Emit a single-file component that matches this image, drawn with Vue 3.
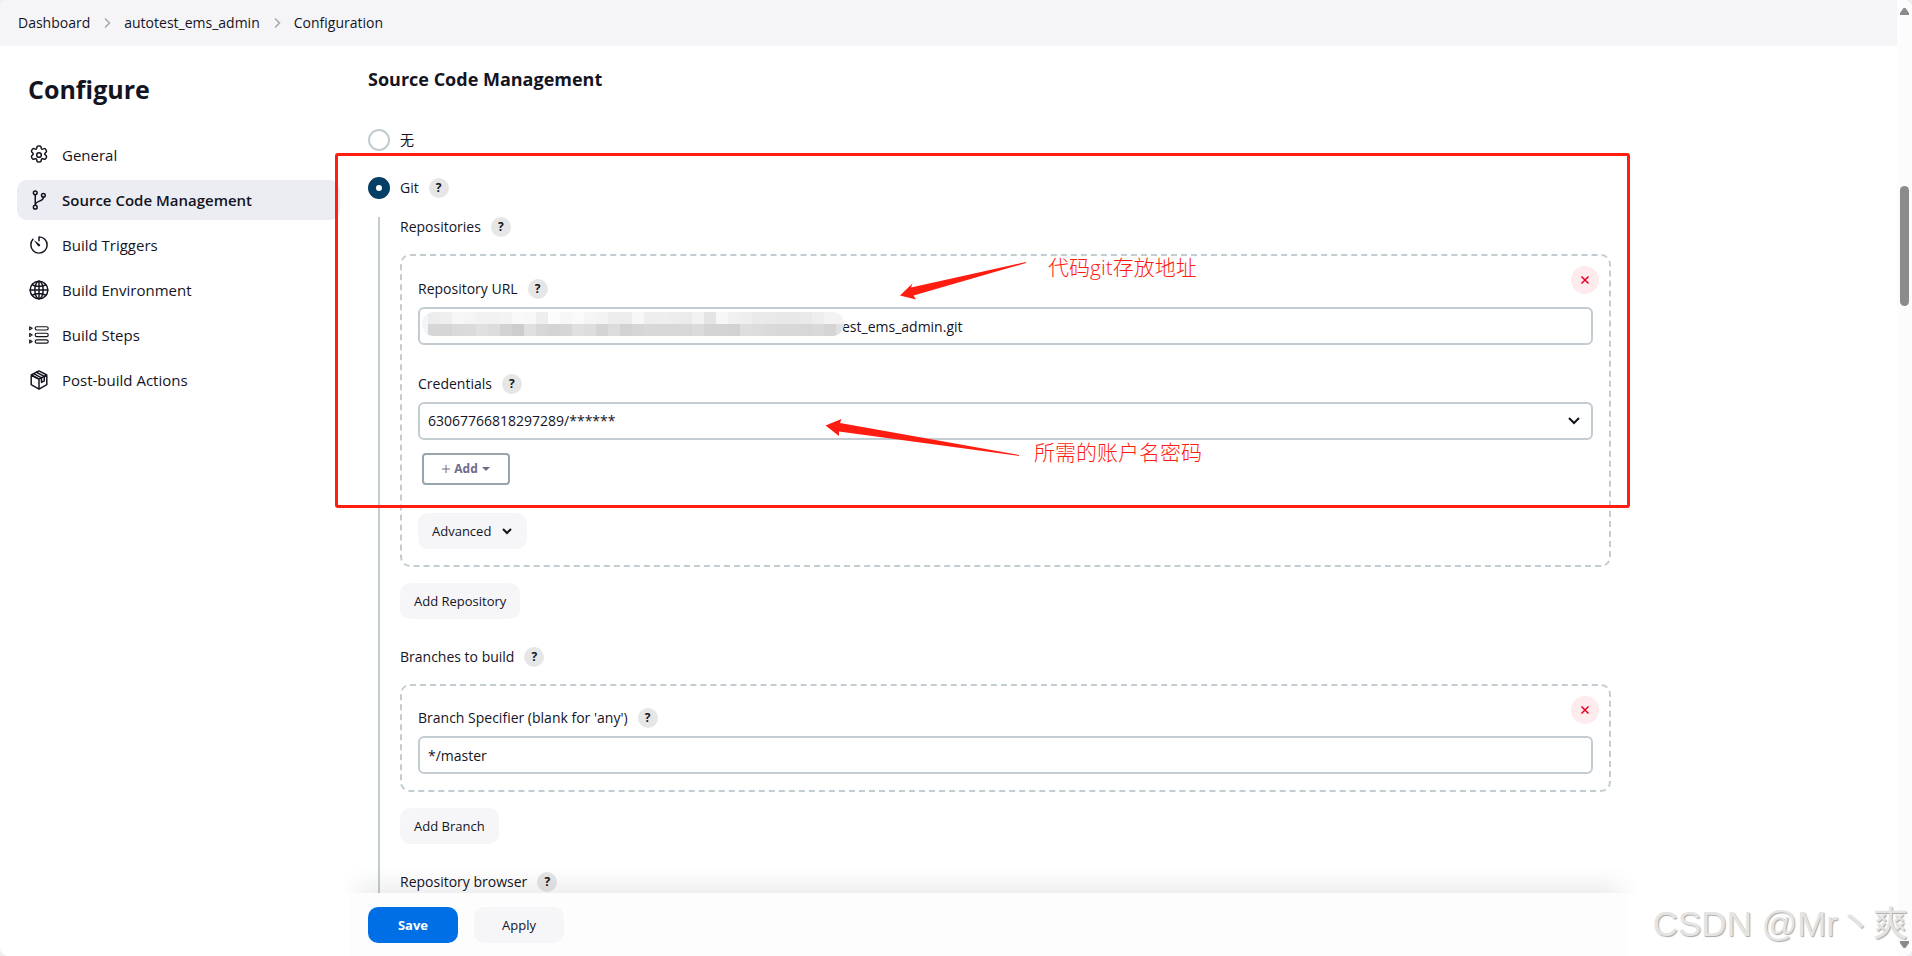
<script setup>
import { ref } from 'vue'

const crumbs = ['Dashboard', 'autotest_ems_admin', 'Configuration']

const navItems = [
  { label: 'General', icon: 'gear' },
  { label: 'Source Code Management', icon: 'branch', active: true },
  { label: 'Build Triggers', icon: 'timer' },
  { label: 'Build Environment', icon: 'globe' },
  { label: 'Build Steps', icon: 'steps' },
  { label: 'Post-build Actions', icon: 'box' },
]

const scm = ref('git')
const repoUrl = ref('est_ems_admin.git')
const credentials = ref('63067766818297289/******')
const branch = ref('*/master')

// Grey levels of the pixelated strip that hides the start of the URL
const maskTop = [236, 239, 247, 245, 242, 242, 243, 249, 248, 238, 252, 247, 250, 245, 243, 237, 237, 247, 238, 238, 237, 235, 242, 228, 247, 240, 238, 234, 234, 232, 232, 234, 238, 243, 243]
const maskBottom = [214, 214, 218, 219, 224, 220, 210, 205, 224, 215, 212, 214, 224, 221, 212, 220, 210, 214, 216, 215, 215, 215, 219, 212, 212, 210, 222, 220, 218, 216, 216, 215, 217, 213, 224]
const maskCells = [maskTop, maskBottom].flatMap((row, y) =>
  row.map((g, x) => ({ x: 6 + x * 12, y: y * 12, fill: `rgb(${g}, ${g}, ${g + 1})` })),
)
</script>

<template>
  <div class="window">
    <div class="page">
      <nav class="breadcrumbs" aria-label="Breadcrumb">
        <template v-for="(crumb, i) in crumbs" :key="crumb">
          <svg v-if="i" class="crumb-sep" viewBox="0 0 8 12"><path d="M2 1.5 6.5 6 2 10.5" /></svg>
          <a href="#">{{ crumb }}</a>
        </template>
      </nav>

      <div class="body">
        <aside class="sidebar">
          <h1>Configure</h1>
          <nav class="tasks" aria-label="Sections">
            <a v-for="item in navItems" :key="item.label" href="#" class="task" :class="{ active: item.active }">
              <svg class="task-icon" viewBox="0 0 512 512">
                <g v-if="item.icon === 'gear'">
                  <circle cx="256" cy="256" r="60" />
                  <path d="M256 24c22 0 44 4 48 14l14 50c4 12 18 20 30 17l50-13c12-3 26 14 38 34s18 40 10 48l-36 38c-9 9-9 25 0 34l36 38c8 8 2 30-10 50s-26 36-38 33l-50-13c-12-3-26 5-30 17l-14 50c-4 10-26 14-48 14s-44-4-48-14l-14-50c-4-12-18-20-30-17l-50 13c-12 3-26-13-38-33s-18-42-10-50l36-38c9-9 9-25 0-34l-36-38c-8-8-2-28 10-48s26-37 38-34l50 13c12 3 26-5 30-17l14-50c4-10 26-14 48-14z" />
                </g>
                <g v-else-if="item.icon === 'branch'">
                  <circle cx="160" cy="72" r="48" />
                  <circle cx="160" cy="440" r="48" />
                  <circle cx="368" cy="136" r="48" />
                  <path d="M160 120v272M368 184c0 128-208 76-208 208" />
                </g>
                <g v-else-if="item.icon === 'timer'">
                  <path d="M100 108A208 208 0 0048 254c0 116 92 210 208 210s208-92 208-208c0-114-90-205-203-208a5 5 0 00-5 5v92" />
                  <path class="solid" d="M230 282 138 156c-6-9 3-18 12-12l126 92a32 32 0 01-46 46z" />
                </g>
                <g v-else-if="item.icon === 'globe'">
                  <circle cx="256" cy="256" r="226" />
                  <ellipse cx="256" cy="256" rx="106" ry="226" />
                  <path d="M256 30v452M30 256h452M82 122c100 58 248 58 348 0M82 390c100-58 248-58 348 0" />
                </g>
                <g v-else-if="item.icon === 'steps'" class="fine">
                  <rect x="158" y="44" width="334" height="84" rx="42" />
                  <rect x="158" y="212" width="334" height="84" rx="42" />
                  <rect x="158" y="380" width="334" height="84" rx="42" />
                  <path d="M18 48v76l62-38zM18 216v76l62-38zM18 384v76l62-38z" />
                </g>
                <g v-else>
                  <path d="M256 24 456 128v246L256 488 56 374V128zM56 128l200 108 200-108M256 236v252" />
                  <path d="M120 94l200 108v116l70-38V164L190 58M222 218 88 146" />
                </g>
              </svg>
              <span>{{ item.label }}</span>
            </a>
          </nav>
        </aside>

        <main class="main">
          <form class="form" @submit.prevent>
            <h2>Source Code Management</h2>

            <div class="radio-row">
              <input id="scm-none" v-model="scm" type="radio" name="scm" value="none" />
              <label for="scm-none">无</label>
            </div>
            <div class="radio-row">
              <input id="scm-git" v-model="scm" type="radio" name="scm" value="git" />
              <label for="scm-git">Git</label>
              <button type="button" class="help" aria-label="Help for Git">?</button>
            </div>

            <div class="nested">
              <div class="label-row">
                <span>Repositories</span>
                <button type="button" class="help" aria-label="Help for Repositories">?</button>
              </div>
              <section class="group repositories">
                <button type="button" class="remove" aria-label="Delete repository">
                  <svg viewBox="0 0 10 10"><path d="M1.5 1.5l7 7M8.5 1.5l-7 7" /></svg>
                </button>
                <div class="label-row">
                  <label for="repo-url">Repository URL</label>
                  <button type="button" class="help" aria-label="Help for Repository URL">?</button>
                </div>
                <div class="control">
                  <input id="repo-url" v-model="repoUrl" class="field masked" type="text" />
                  <svg class="mask" width="422" height="24" viewBox="0 0 422 24">
                    <clipPath id="mask-shape"><rect width="422" height="24" rx="12" /></clipPath>
                    <g clip-path="url(#mask-shape)" shape-rendering="crispEdges">
                      <rect width="422" height="24" fill="#f4f5f8" />
                      <rect v-for="c in maskCells" :key="`${c.x}-${c.y}`" :x="c.x" :y="c.y" width="12" height="12" :fill="c.fill" />
                    </g>
                  </svg>
                </div>

                <div class="label-row next">
                  <label for="credentials">Credentials</label>
                  <button type="button" class="help" aria-label="Help for Credentials">?</button>
                </div>
                <div class="control">
                  <select id="credentials" v-model="credentials" class="field">
                    <option>63067766818297289/******</option>
                  </select>
                  <svg class="select-arrow" viewBox="0 0 14 9"><path d="M2 2l5 5 5-5" /></svg>
                </div>
                <button type="button" class="add-credential">
                  <svg class="plus" viewBox="0 0 8 8"><path d="M4 0v8M0 4h8" /></svg>
                  Add
                  <svg class="caret" viewBox="0 0 8 4"><path d="M0 0h8L4 4z" /></svg>
                </button>
                <button type="button" class="btn advanced">
                  Advanced
                  <svg class="chevron" viewBox="0 0 12 8"><path d="M2 2l4 4 4-4" /></svg>
                </button>
              </section>
              <button type="button" class="btn">Add Repository</button>

              <div class="label-row section">
                <span>Branches to build</span>
                <button type="button" class="help" aria-label="Help for Branches to build">?</button>
              </div>
              <section class="group">
                <button type="button" class="remove" aria-label="Delete branch">
                  <svg viewBox="0 0 10 10"><path d="M1.5 1.5l7 7M8.5 1.5l-7 7" /></svg>
                </button>
                <div class="label-row">
                  <label for="branch">Branch Specifier (blank for 'any')</label>
                  <button type="button" class="help" aria-label="Help for Branch Specifier">?</button>
                </div>
                <div class="control">
                  <input id="branch" v-model="branch" class="field" type="text" />
                </div>
              </section>
              <button type="button" class="btn">Add Branch</button>

              <div class="label-row section">
                <span>Repository browser</span>
                <button type="button" class="help" aria-label="Help for Repository browser">?</button>
              </div>
            </div>

            <div class="highlight"></div>
            <svg class="arrows" width="210" height="200" viewBox="820 260 210 200">
              <path d="M900 295.5 912.5 283.5 911 287.5 1026 262v1L913.5 295.5 916 299.5z" />
              <path d="M825.5 425.5 841.5 419 840 423 1019 455v1L839 431.5V436z" />
            </svg>
            <p class="note note-url">代码git存放地址</p>
            <p class="note note-credentials">所需的账户名密码</p>
          </form>

          <footer class="actions">
            <button type="button" class="btn primary">Save</button>
            <button type="button" class="btn wide">Apply</button>
          </footer>
        </main>
      </div>
    </div>

    <div class="scrollbar" aria-hidden="true">
      <svg viewBox="0 0 9 7"><path d="M3.5 0h2L9 5v2H0V5z" /></svg>
      <div class="track"><div class="thumb"></div></div>
      <svg viewBox="0 0 9 7"><path d="M0 0h9v2L5.5 7h-2L0 2z" /></svg>
    </div>
    <div class="watermark">CSDN @Mr丶爽</div>
  </div>
</template>

<style>
body {
  margin: 0;
  background: #eeeef0;
}
</style>

<style scoped>
.window {
  position: relative;
  display: flex;
  height: 100vh;
  overflow: hidden;
  border-radius: 8px;
  background: #fff;
  color: #14141f;
  font: 14px/20px "Open Sans", "Noto Sans CJK SC", sans-serif;
}
button,
input,
select {
  font: inherit;
  color: inherit;
  margin: 0;
}
button {
  border: 0;
  padding: 0;
  cursor: pointer;
}
a {
  color: inherit;
  text-decoration: none;
}
svg {
  display: block;
  flex: none;
  fill: none;
  stroke: currentColor;
}
.page {
  flex: 1;
  min-width: 0;
  display: flex;
  flex-direction: column;
}
.breadcrumbs {
  flex: none;
  display: flex;
  align-items: center;
  height: 46px;
  padding-left: 18px;
  background: #f5f5f8;
}
.crumb-sep {
  width: 8px;
  height: 12px;
  margin: 0 13px;
  color: #a5a5b5;
  stroke-width: 1.5;
}
.body {
  flex: 1;
  min-height: 0;
  display: flex;
}
.sidebar {
  flex: none;
  box-sizing: border-box;
  width: 368px;
  padding: 27px 28px 0 17px;
}
h1 {
  margin: 0 0 30px 11px;
  font-size: 25px;
  line-height: 32px;
  font-weight: 700;
}
.tasks {
  display: flex;
  flex-direction: column;
  gap: 5px;
}
.task {
  display: flex;
  align-items: center;
  gap: 13px;
  height: 40px;
  padding-left: 12px;
  border-radius: 10px;
  font-size: 15px;
}
.task.active {
  background: #ecedf3;
  font-weight: 600;
}
.task-icon {
  width: 20px;
  height: 20px;
  stroke-width: 38;
  stroke-linecap: round;
  stroke-linejoin: round;
}
.task-icon .fine {
  stroke-width: 30;
}
.task-icon .solid {
  fill: currentColor;
  stroke: none;
}
.main {
  flex: 1;
  min-width: 0;
  max-width: 1243px;
  display: flex;
  flex-direction: column;
}
.form {
  position: relative;
  flex: 1;
  min-height: 0;
  display: flex;
  flex-direction: column;
}
h2 {
  margin: 0;
  padding: 21px 0 38px;
  font-size: 18px;
  line-height: 24px;
  font-weight: 700;
}
.radio-row {
  display: flex;
  align-items: center;
  gap: 10px;
  height: 22px;
  margin-bottom: 26px;
}
.radio-row input {
  appearance: none;
  width: 22px;
  height: 22px;
  border: 2px solid #c3cdd1;
  border-radius: 50%;
  background: #fff;
}
.radio-row input:checked {
  border: 8px solid #063f66;
}
.radio-row + .radio-row {
  margin-bottom: 18px;
}
.help {
  width: 20px;
  height: 20px;
  border-radius: 50%;
  background: #e6e6e6;
  font-size: 12px;
  line-height: 20px;
  font-weight: 700;
  text-align: center;
}
.nested {
  flex: 1;
  min-height: 0;
  margin-left: 10px;
  padding-left: 20px;
  border-left: 2px solid #c3cdd1;
}
.label-row {
  display: flex;
  align-items: center;
  gap: 10px;
  height: 20px;
}
.group {
  position: relative;
  margin: 17px 0 16px;
  padding: 22px 16px 16px;
  border: 2px dashed #c3cdd1;
  border-radius: 10px;
}
.group.repositories {
  padding-top: 23px;
}
.remove {
  position: absolute;
  top: 10px;
  right: 10px;
  display: grid;
  place-items: center;
  width: 28px;
  height: 28px;
  border-radius: 50%;
  background: #fdebed;
  color: #e6001f;
}
.remove svg {
  width: 10px;
  height: 10px;
  stroke-width: 1.5;
}
.control {
  position: relative;
  margin-top: 8px;
}
.field {
  appearance: none;
  display: block;
  box-sizing: border-box;
  width: 100%;
  height: 38px;
  padding: 0 8px;
  border: 2px solid #c3cdd1;
  border-radius: 6px;
  background: #fff;
  outline: none;
}
.field.masked {
  padding-left: 422px;
}
.mask {
  position: absolute;
  top: 5px;
  left: 4px;
  stroke: none;
}
.label-row.next {
  margin-top: 29px;
}
.select-arrow {
  position: absolute;
  top: 14px;
  right: 12px;
  width: 14px;
  height: 9px;
  stroke-width: 2;
  pointer-events: none;
}
.add-credential {
  display: flex;
  align-items: center;
  justify-content: center;
  gap: 4px;
  box-sizing: border-box;
  width: 88px;
  height: 32px;
  margin: 13px 0 28px 4px;
  border: 2px solid #98a5ad;
  border-radius: 4px;
  background: #fff;
  color: #6f6b88;
  font-size: 12px;
  font-weight: 700;
}
.plus {
  width: 8px;
  height: 8px;
  stroke-width: 1;
}
.caret {
  width: 8px;
  height: 4px;
  fill: currentColor;
  stroke: none;
}
.btn {
  display: flex;
  align-items: center;
  justify-content: center;
  gap: 10px;
  height: 36px;
  padding: 0 14px;
  border-radius: 10px;
  background: #f6f6f9;
  font-size: 13px;
}
.chevron {
  width: 12px;
  height: 8px;
  stroke-width: 2;
}
.label-row.section {
  margin-top: 28px;
}
.highlight {
  position: absolute;
  top: 107px;
  left: -33px;
  right: -19px;
  box-sizing: border-box;
  height: 355px;
  border: 3px solid #ff1c10;
  border-radius: 3px;
  pointer-events: none;
}
.arrows {
  position: absolute;
  top: 214px;
  left: 452px;
  fill: #ff1c10;
  stroke: none;
  pointer-events: none;
}
.note {
  position: absolute;
  margin: 0;
  color: #ff1c10;
  font-size: 21px;
  line-height: 28px;
  font-weight: 300;
  white-space: nowrap;
}
.note-url {
  top: 207px;
  left: 680px;
}
.note-credentials {
  top: 392px;
  left: 666px;
}
.actions {
  position: relative;
  flex: none;
  display: flex;
  gap: 16px;
  margin: 0 -18px;
  padding: 14px 18px 13px;
  background: #fdfdfd;
}
.actions::before {
  content: "";
  position: absolute;
  left: -8px;
  right: -8px;
  bottom: 100%;
  height: 26px;
  background: linear-gradient(to top, rgba(0, 0, 0, 0.06), rgba(0, 0, 0, 0));
  mask-image: linear-gradient(to right, transparent, #000 32px, #000 calc(100% - 32px), transparent);
  pointer-events: none;
}
.btn.primary,
.btn.wide {
  width: 90px;
}
.btn.primary {
  background: #006fe6;
  color: #fff;
  font-weight: 700;
}
.scrollbar {
  flex: none;
  display: flex;
  flex-direction: column;
  align-items: center;
  box-sizing: border-box;
  width: 15px;
  padding: 8px 0;
  background: #fcfcfc;
}
.scrollbar svg {
  width: 9px;
  height: 7px;
  fill: #8b8b8b;
  stroke: none;
}
.track {
  flex: 1;
  padding-top: 171px;
}
.thumb {
  width: 9px;
  height: 120px;
  border-radius: 5px;
  background: #8b8b8b;
}
.watermark {
  position: absolute;
  right: 4px;
  bottom: 8px;
  color: #e4e4e4;
  font: 35px/48px "Liberation Sans", "Noto Sans CJK SC", sans-serif;
  text-shadow: 1px 1px 1px #a8a8a8;
  white-space: nowrap;
  pointer-events: none;
}
</style>
